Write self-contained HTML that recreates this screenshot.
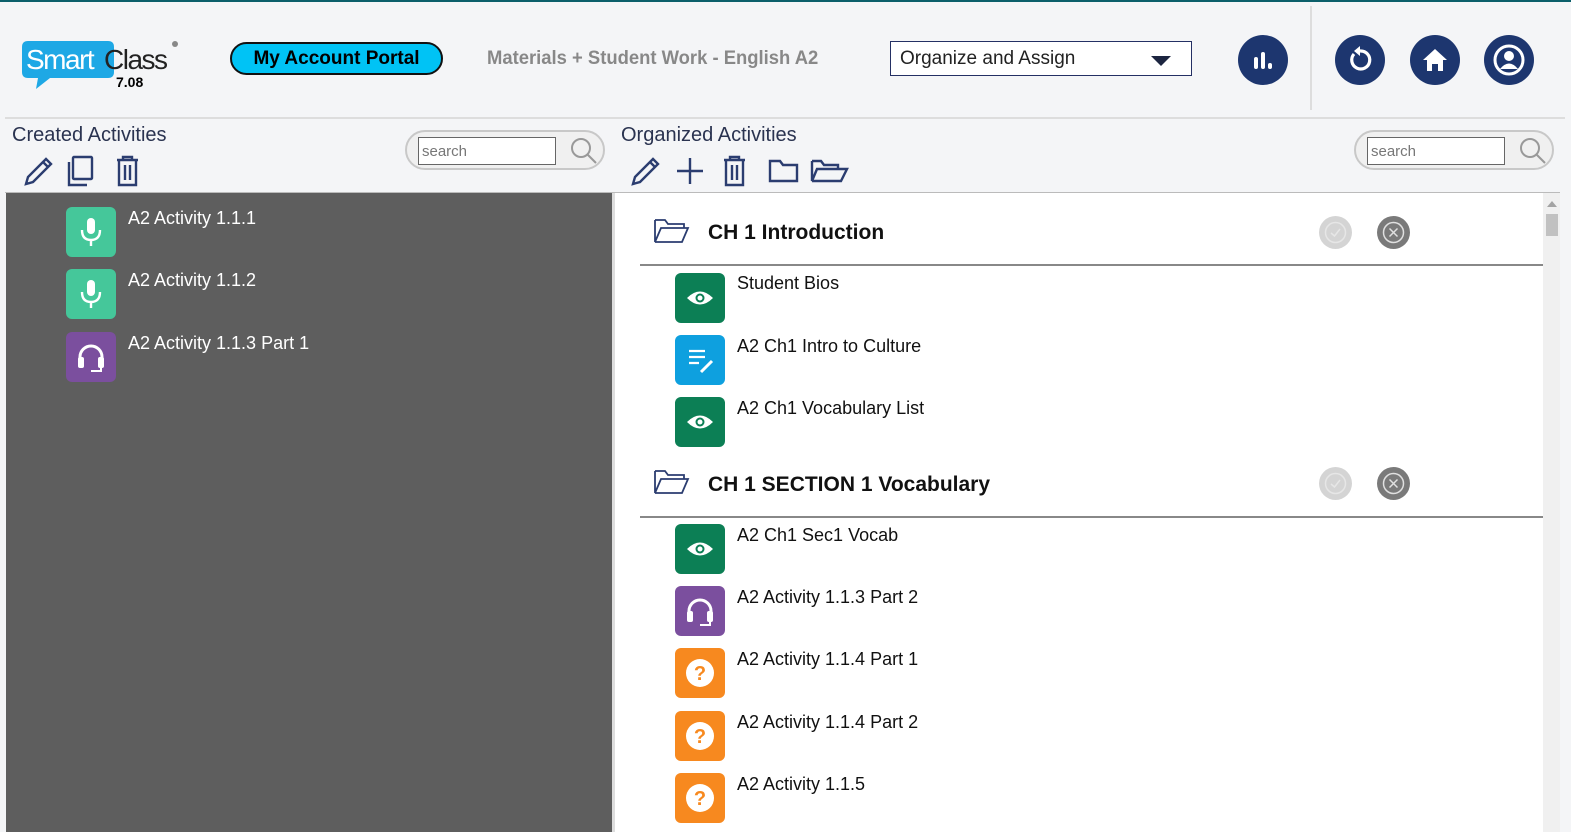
<!DOCTYPE html>
<html><head><meta charset="utf-8">
<style>
*{margin:0;padding:0;box-sizing:border-box}
body{width:1571px;height:832px;overflow:hidden;background:#f4f5f7;font-family:"Liberation Sans",sans-serif;position:relative}
.a{position:absolute}
.ic{position:absolute;width:50px;height:50px;border-radius:6px;display:flex;align-items:center;justify-content:center}
.g{background:#45c79a}.eye{background:#0c7f55}.blue{background:#0ea0df}.pur{background:#7b4f9e}.org{background:#f7891f}
.lt{position:absolute;color:#fff;font-size:18px}
.rt{position:absolute;color:#111;font-size:18px}
.circ{position:absolute;width:50px;height:50px;border-radius:50%;background:#1d366f;display:flex;align-items:center;justify-content:center}
.srch{position:absolute;width:200px;height:40px;border:2px solid #c8c8c8;border-radius:20px;background:#f0f0f0}
.srch div{position:absolute;left:11px;top:5px;width:138px;height:28px;border:1px solid #666;background:#fff;font-size:15px;color:#777;padding:5px 3px}
.sec{position:absolute;font-weight:bold;font-size:21px;color:#111}
</style></head><body>
<div class="a" style="left:0;top:0;width:1571px;height:2px;background:#0b5f6a"></div>
<svg class="a" style="left:22px;top:38px" width="160" height="54">
<path d="M6 3 H86 Q92 3 92 9 V34 Q92 40 86 40 H28 L14 51 L16 40 H6 Q0 40 0 34 V9 Q0 3 6 3Z" fill="#1ea8e5"/>
<text x="4" y="31" font-family="Liberation Sans" font-size="28" fill="#fff" letter-spacing="-1.5">Smart</text>
<text x="82" y="31" font-family="Liberation Sans" font-size="28" fill="#222" letter-spacing="-1.5">Class</text>
<circle cx="153" cy="6" r="3" fill="#888"/>
<text x="94" y="49" font-family="Liberation Sans" font-weight="bold" font-size="14" fill="#000">7.08</text>
</svg>
<div class="a" style="left:230px;top:42px;width:213px;height:33px;border:2px solid #111;border-radius:17px;background:#00c3f5;font-weight:bold;font-size:19px;text-align:center;line-height:29px;color:#000">My Account Portal</div>
<div class="a" style="left:487px;top:48px;font-size:19px;font-weight:bold;color:#888;transform:scaleX(0.97);transform-origin:left">Materials + Student Work - English A2</div>
<div class="a" style="left:890px;top:41px;width:302px;height:35px;border:1px solid #243064;background:#fff;font-size:19px;color:#222;padding:6px 9px">Organize and Assign<span class="a" style="right:20px;top:14px;width:0;height:0;border-left:10px solid transparent;border-right:10px solid transparent;border-top:10px solid #1c2540"></span></div>
<div class="circ" style="left:1238px;top:35px"><svg width="24" height="24"><rect x="3" y="9" width="4" height="12" rx="2" fill="#fff"/><rect x="10" y="4" width="4" height="17" rx="2" fill="#fff"/><rect x="17" y="15" width="4" height="6" rx="2" fill="#fff"/></svg></div>
<div class="a" style="left:1310px;top:6px;width:2px;height:104px;background:#ddd"></div>
<div class="circ" style="left:1335px;top:35px"><svg width="30" height="30"><path d="M9 9 A9 9 0 1 0 15 6" fill="none" stroke="#fff" stroke-width="3.2"/><path d="M15 1 L15 11 L9 6Z" fill="#fff"/></svg></div>
<div class="circ" style="left:1410px;top:35px"><svg width="30" height="30"><path d="M15 4 L27 15 H23 V26 H18 V19 H12 V26 H7 V15 H3Z" fill="#fff"/></svg></div>
<div class="circ" style="left:1484px;top:35px"><svg width="34" height="34"><circle cx="17" cy="17" r="14" fill="none" stroke="#fff" stroke-width="3"/><circle cx="17" cy="13" r="5" fill="#fff"/><path d="M8 26 Q17 15 26 26" fill="#fff"/></svg></div>
<div class="a" style="left:5px;top:117px;width:1560px;height:2px;background:#ddd"></div>
<div class="a" style="left:12px;top:124px;font-size:20px;color:#2a3350">Created Activities</div>
<svg class="a" style="left:20px;top:153px" width="130" height="35" fill="none" stroke="#2b3d70" stroke-width="2.4">
<path d="M6 31 L8 24 L26 6 L31 11 L13 29Z M23 9 L28 14"/>
<rect x="53" y="4" width="19" height="22" rx="1"/><path d="M49 9 V32 H67"/>
<path d="M97 7 H118 M103 7 V4 H112 V7 M99 7 V32 H116 V7 M105 12 V27 M110 12 V27"/>
</svg>
<div class="srch" style="left:405px;top:130px"><div>search</div><svg class="a" style="left:162px;top:4px" width="30" height="30" fill="none" stroke="#999" stroke-width="2"><circle cx="12" cy="12" r="9"/><path d="M18 18 L27 27"/></svg></div>
<div class="a" style="left:621px;top:124px;font-size:20px;color:#2a3350">Organized Activities</div>
<svg class="a" style="left:627px;top:153px" width="230" height="35" fill="none" stroke="#2b3d70" stroke-width="2.4">
<path d="M6 31 L8 24 L26 6 L31 11 L13 29Z M23 9 L28 14"/>
<path d="M63 5 V31 M50 18 H76"/>
<path d="M97 7 H118 M103 7 V4 H112 V7 M99 7 V32 H116 V7 M105 12 V27 M110 12 V27"/>
<path d="M143 8 H153 L156 12 H170 V28 H143Z"/>
<path d="M185 8 H194 L197 12 H211 V16 M185 8 V28 L190 16 H220 L214 28 H185"/>
</svg>
<div class="srch" style="left:1354px;top:130px"><div>search</div><svg class="a" style="left:162px;top:4px" width="30" height="30" fill="none" stroke="#999" stroke-width="2"><circle cx="12" cy="12" r="9"/><path d="M18 18 L27 27"/></svg></div>
<div class="a" style="left:6px;top:193px;width:607px;height:639px;background:#5e5e5e"></div>
<div class="a" style="left:612px;top:193px;width:3px;height:639px;background:#ddd"></div>
<div class="a" style="left:5px;top:192px;width:1555px;height:1px;background:#bbb"></div>
<svg width="0" height="0" style="position:absolute"><defs>
<g id="mic"><rect x="-4" y="-14" width="8" height="16" rx="4" fill="#fff"/><path d="M-9 -2 Q-9 8 0 8 Q9 8 9 -2 M0 8 V14" fill="none" stroke="#fff" stroke-width="2.4"/></g>
<g id="hp"><path d="M-11 8 V0 A11 11 0 0 1 11 0 V8" fill="none" stroke="#fff" stroke-width="3"/><rect x="-13" y="0" width="6" height="11" rx="2" fill="#fff"/><rect x="7" y="0" width="6" height="11" rx="2" fill="#fff"/><path d="M10 11 V14 H0" fill="none" stroke="#fff" stroke-width="2"/></g>
<g id="eye"><path d="M-13 0 Q0 -13 13 0 Q0 13 -13 0Z" fill="#fff"/><circle r="4.5" fill="#0c7f55"/><circle r="2.5" fill="#fff"/></g>
<g id="q"><circle r="14" fill="#fff"/><text y="7" text-anchor="middle" font-family="Liberation Sans" font-weight="bold" font-size="20" fill="#f7891f">?</text></g>
<g id="pen"><path d="M-11 -9 H5 M-11 -3 H5 M-11 3 H-1" stroke="#fff" stroke-width="2.2"/><path d="M1 12 L12 1" stroke="#fff" stroke-width="3"/></g>
<g id="fold"><path d="M2 4 H12 L15 8 H31 V12 M2 4 V26 L8 12 H35 L29 26 H2" fill="none" stroke="#2b3d70" stroke-width="1.8"/></g>
<g id="chk"><circle cx="16.5" cy="16.5" r="10" fill="none" stroke="#e6e6e6" stroke-width="1.5"/><path d="M12 17 L15.5 20 L21 13" fill="none" stroke="#e6e6e6" stroke-width="1.5"/></g>
</defs></svg>
<div class="ic g" style="left:66px;top:207px"><svg width="50" height="50"><use href="#mic" x="25" y="25"/></svg></div>
<div class="lt" style="left:128px;top:208px">A2 Activity 1.1.1</div>
<div class="ic g" style="left:66px;top:269px"><svg width="50" height="50"><use href="#mic" x="25" y="25"/></svg></div>
<div class="lt" style="left:128px;top:270px">A2 Activity 1.1.2</div>
<div class="ic pur" style="left:66px;top:332px"><svg width="50" height="50"><use href="#hp" x="25" y="25"/></svg></div>
<div class="lt" style="left:128px;top:333px">A2 Activity 1.1.3 Part 1</div>
<div class="a" style="left:615px;top:193px;width:928px;height:639px;background:#fff"></div>
<div class="a" style="left:1543px;top:193px;width:17px;height:639px;background:#f0f0f0"></div>
<div class="a" style="left:1546px;top:214px;width:12px;height:22px;background:#c1c1c1"></div>
<div class="a" style="left:1547px;top:201px;width:0;height:0;border-left:5px solid transparent;border-right:5px solid transparent;border-bottom:6px solid #a3a3a3"></div>

<svg class="a" style="left:653px;top:216px" width="40" height="30"><use href="#fold"/></svg>
<div class="sec" style="left:708px;top:221px">CH 1 Introduction</div>
<div class="a" style="left:1319px;top:216px;width:33px;height:33px;border-radius:50%;background:#d4d4d4"><svg width="33" height="33"><use href="#chk"/></svg></div>
<div class="a" style="left:1377px;top:216px;width:33px;height:33px;border-radius:50%;background:#7a7a7a"><svg width="33" height="33"><circle cx="16.5" cy="16.5" r="10" fill="none" stroke="#e0e0e0" stroke-width="1.5"/><path d="M12.5 12.5 L20.5 20.5 M20.5 12.5 L12.5 20.5" stroke="#e0e0e0" stroke-width="1.5"/></svg></div>
<div class="a" style="left:640px;top:264px;width:903px;height:2px;background:#888"></div>
<div class="ic eye" style="left:675px;top:273px"><svg width="50" height="50"><use href="#eye" x="25" y="25"/></svg></div>
<div class="rt" style="left:737px;top:273px">Student Bios</div>
<div class="ic blue" style="left:675px;top:335px"><svg width="50" height="50"><use href="#pen" x="25" y="25"/></svg></div>
<div class="rt" style="left:737px;top:336px">A2 Ch1 Intro to Culture</div>
<div class="ic eye" style="left:675px;top:397px"><svg width="50" height="50"><use href="#eye" x="25" y="25"/></svg></div>
<div class="rt" style="left:737px;top:398px">A2 Ch1 Vocabulary List</div>

<svg class="a" style="left:653px;top:467px" width="40" height="30"><use href="#fold"/></svg>
<div class="sec" style="left:708px;top:473px">CH 1 SECTION 1 Vocabulary</div>
<div class="a" style="left:1319px;top:467px;width:33px;height:33px;border-radius:50%;background:#d4d4d4"><svg width="33" height="33"><use href="#chk"/></svg></div>
<div class="a" style="left:1377px;top:467px;width:33px;height:33px;border-radius:50%;background:#7a7a7a"><svg width="33" height="33"><circle cx="16.5" cy="16.5" r="10" fill="none" stroke="#e0e0e0" stroke-width="1.5"/><path d="M12.5 12.5 L20.5 20.5 M20.5 12.5 L12.5 20.5" stroke="#e0e0e0" stroke-width="1.5"/></svg></div>
<div class="a" style="left:640px;top:516px;width:903px;height:2px;background:#888"></div>
<div class="ic eye" style="left:675px;top:524px"><svg width="50" height="50"><use href="#eye" x="25" y="25"/></svg></div>
<div class="rt" style="left:737px;top:525px">A2 Ch1 Sec1 Vocab</div>
<div class="ic pur" style="left:675px;top:586px"><svg width="50" height="50"><use href="#hp" x="25" y="25"/></svg></div>
<div class="rt" style="left:737px;top:587px">A2 Activity 1.1.3 Part 2</div>
<div class="ic org" style="left:675px;top:648px"><svg width="50" height="50"><use href="#q" x="25" y="25"/></svg></div>
<div class="rt" style="left:737px;top:649px">A2 Activity 1.1.4 Part 1</div>
<div class="ic org" style="left:675px;top:711px"><svg width="50" height="50"><use href="#q" x="25" y="25"/></svg></div>
<div class="rt" style="left:737px;top:712px">A2 Activity 1.1.4 Part 2</div>
<div class="ic org" style="left:675px;top:773px"><svg width="50" height="50"><use href="#q" x="25" y="25"/></svg></div>
<div class="rt" style="left:737px;top:774px">A2 Activity 1.1.5</div>
</body></html>
